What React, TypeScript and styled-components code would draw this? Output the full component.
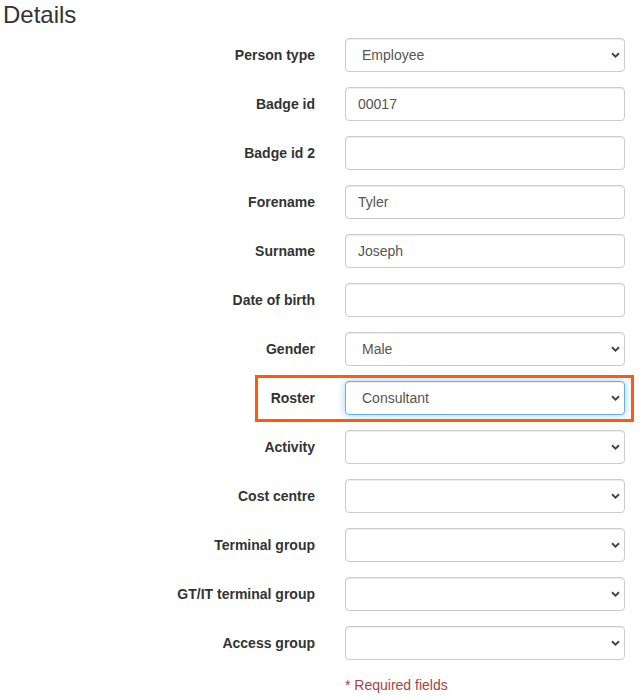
import { FC } from 'react';
import styled, { createGlobalStyle, css } from 'styled-components';

const GlobalStyle = createGlobalStyle`
  html, body {
    margin: 0;
    padding: 0;
    background: #fff;
  }
  body {
    font-family: "Liberation Sans", Arial, Helvetica, sans-serif;
    font-size: 14px;
    color: #333;
  }
`;

const Page = styled.div`
  width: 640px;
  padding: 0 0 0 3px;
  box-sizing: border-box;
`;

const Title = styled.h3`
  margin: 0;
  font-size: 24px;
  font-weight: 400;
  line-height: 30px;
  color: #333;
`;

const Form = styled.form`
  display: flex;
  flex-direction: column;
  gap: 15px;
  margin-top: 8px;
`;

const Row = styled.div<{ $highlight?: boolean }>`
  position: relative;
  display: grid;
  grid-template-columns: 312px 280px;
  column-gap: 30px;
  align-items: center;

  ${({ $highlight }) =>
    $highlight &&
    css`
      &::after {
        content: '';
        position: absolute;
        left: 252px;
        top: -6px;
        width: 373px;
        height: 41px;
        border: 3px solid #ff5a0a;
        pointer-events: none;
      }
    `}
`;

const Label = styled.label`
  text-align: right;
  font-weight: 700;
  font-size: 14px;
  color: #333;
`;

const fieldBase = css`
  box-sizing: border-box;
  width: 280px;
  height: 34px;
  padding: 6px 12px;
  font-family: "Liberation Sans", Arial, Helvetica, sans-serif;
  font-size: 14px;
  color: #555;
  background: #fff;
  border: 1px solid #ccc;
  border-radius: 4px;
  box-shadow: inset 0 1px 1px rgba(0, 0, 0, 0.075);
  outline: none;
`;

const TextInput = styled.input`
  ${fieldBase}
`;

const SelectWrap = styled.div`
  position: relative;
  width: 280px;
  height: 34px;
`;

const Select = styled.select<{ $focused?: boolean }>`
  ${fieldBase}
  appearance: none;
  padding-left: 16px;

  ${({ $focused }) =>
    $focused &&
    css`
      border-color: #66afe9;
      box-shadow: inset 0 1px 1px rgba(0, 0, 0, 0.075), 0 0 8px rgba(102, 175, 233, 0.6);
    `}
`;

const Chevron = styled.svg`
  position: absolute;
  right: 5px;
  top: 14px;
  width: 9px;
  height: 6px;
  pointer-events: none;
`;

const Required = styled.div`
  margin: 17px 0 0 342px;
  color: #a94442;
  font-size: 14px;
`;

type Field = {
  label: string;
  kind: 'select' | 'text';
  value?: string;
  highlight?: boolean;
};

const fields: Field[] = [
  { label: 'Person type', kind: 'select', value: 'Employee' },
  { label: 'Badge id', kind: 'text', value: '00017' },
  { label: 'Badge id 2', kind: 'text' },
  { label: 'Forename', kind: 'text', value: 'Tyler' },
  { label: 'Surname', kind: 'text', value: 'Joseph' },
  { label: 'Date of birth', kind: 'text' },
  { label: 'Gender', kind: 'select', value: 'Male' },
  { label: 'Roster', kind: 'select', value: 'Consultant', highlight: true },
  { label: 'Activity', kind: 'select' },
  { label: 'Cost centre', kind: 'select' },
  { label: 'Terminal group', kind: 'select' },
  { label: 'GT/IT terminal group', kind: 'select' },
  { label: 'Access group', kind: 'select' },
];

const DropSelect: FC<{ value?: string; focused?: boolean }> = ({ value, focused }) => (
  <SelectWrap>
    <Select $focused={focused} defaultValue={value ?? ''}>
      <option value={value ?? ''}>{value ?? ''}</option>
    </Select>
    <Chevron viewBox="0 0 9 6">
      <path d="M1 1.2 L4.5 4.6 L8 1.2" fill="none" stroke="#444" strokeWidth="1.9" />
    </Chevron>
  </SelectWrap>
);

export default function App() {
  return (
    <Page>
      <GlobalStyle />
      <Title>Details</Title>
      <Form>
        {fields.map((f) => (
          <Row key={f.label} $highlight={f.highlight}>
            <Label>{f.label}</Label>
            {f.kind === 'select' ? (
              <DropSelect value={f.value} focused={f.highlight} />
            ) : (
              <TextInput type="text" defaultValue={f.value ?? ''} />
            )}
          </Row>
        ))}
      </Form>
      <Required>* Required fields</Required>
    </Page>
  );
}
